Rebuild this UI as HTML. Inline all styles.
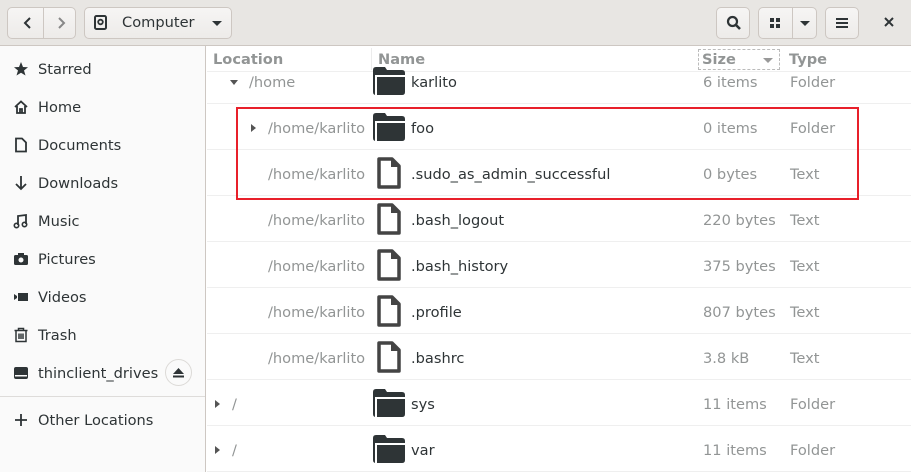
<!DOCTYPE html>
<html><head><style>
*{box-sizing:border-box;margin:0;padding:0}
body{width:911px;height:472px;overflow:hidden;font-family:"DejaVu Sans",sans-serif;background:#fff;position:relative;font-size:14.6px;color:#2e3436}
.hdr{position:absolute;left:0;top:0;width:911px;height:46px;background:#e8e6e3;border-bottom:1px solid #cdc7c2}
.btn{position:absolute;top:7px;height:32px;background:linear-gradient(#f6f5f4,#edebe9);border:1px solid #cdc7c2;border-radius:5px}
.side{position:absolute;left:0;top:46px;width:206px;height:426px;background:#fafafa;border-right:1px solid #cdc7c2}
.si{position:absolute;left:38px;font-size:14.6px;color:#2e3436;line-height:18px;margin-top:1px}
.ic{position:absolute;left:13px}
.ch{position:absolute;top:46px;height:25px;font-weight:bold;color:#929595;font-size:14.6px;line-height:27px}
.row{position:absolute;left:207px;width:704px;height:46px;border-bottom:1px solid #efefef}
.loc{position:absolute;top:16px;color:#929595;white-space:nowrap}
.nm{position:absolute;left:204px;top:16px;color:#2e3436;white-space:nowrap}
.sz{position:absolute;left:496px;top:16px;color:#929595}
.ty{position:absolute;left:583px;top:16px;color:#929595}
.fold{position:absolute;left:166px;top:9px}
.file{position:absolute;left:170px;top:7px}
.tri{position:absolute;top:20px;width:0;height:0;border-top:4px solid transparent;border-bottom:4px solid transparent;border-left:5px solid #555}
</style></head><body>
<div class="hdr">
 <div class="btn" style="left:7px;width:69px"><div style="position:absolute;left:35px;top:0;width:1px;height:30px;background:#cdc7c2"></div>
  <svg style="position:absolute;left:14px;top:8px" width="12" height="14"><path d="M8 2 L3 7 L8 12" stroke="#2e3436" stroke-width="2" fill="none"/></svg>
  <svg style="position:absolute;left:48px;top:8px" width="12" height="14"><path d="M3 2 L8 7 L3 12" stroke="#888" stroke-width="2" fill="none"/></svg></div>
 <div class="btn" style="left:84px;width:148px">
  <svg style="position:absolute;left:9px;top:7px" width="14" height="16"><rect x="1" y="1" width="11" height="13" rx="1.5" fill="none" stroke="#2e3436" stroke-width="2"/><circle cx="6.5" cy="7" r="2.3" fill="none" stroke="#2e3436" stroke-width="1.8"/></svg>
  <span style="position:absolute;left:37px;top:6px;font-size:14.6px">Computer</span>
  <div style="position:absolute;left:127px;top:13px;border-left:5px solid transparent;border-right:5px solid transparent;border-top:5px solid #2e3436"></div></div>
 <div class="btn" style="left:716px;width:34px"><svg style="position:absolute;left:9px;top:7px" width="16" height="16"><circle cx="6.5" cy="6.5" r="4.5" fill="none" stroke="#2e3436" stroke-width="2.2"/><path d="M10 10 L14 14" stroke="#2e3436" stroke-width="2.6"/></svg></div>
 <div class="btn" style="left:758px;width:59px"><div style="position:absolute;left:33px;top:0;width:1px;height:30px;background:#cdc7c2"></div>
  <svg style="position:absolute;left:11px;top:10px" width="10" height="10"><rect x="0" y="0" width="4" height="4" fill="#2e3436"/><rect x="6" y="0" width="4" height="4" fill="#2e3436"/><rect x="0" y="6" width="4" height="4" fill="#2e3436"/><rect x="6" y="6" width="4" height="4" fill="#2e3436"/></svg>
  <div style="position:absolute;left:41px;top:13px;border-left:5px solid transparent;border-right:5px solid transparent;border-top:5px solid #2e3436"></div></div>
 <div class="btn" style="left:825px;width:34px"><svg style="position:absolute;left:10px;top:9px" width="12" height="12"><path d="M0 2H12M0 6H12M0 10H12" stroke="#2e3436" stroke-width="2"/></svg></div>
 <svg style="position:absolute;left:884px;top:17px" width="10" height="10"><path d="M1 1L9 9M9 1L1 9" stroke="#2e3436" stroke-width="2"/></svg>
</div>
<div class="side">
 <svg class="ic" style="top:15px" width="16" height="16"><path d="M8 1 L10 6 L15 6.3 L11 9.5 L12.5 14.5 L8 11.7 L3.5 14.5 L5 9.5 L1 6.3 L6 6 Z" fill="#2e3436"/></svg><div class="si" style="top:14px">Starred</div>
 <svg class="ic" style="top:53px" width="16" height="16"><path d="M2 8 L8 2.5 L14 8 M4 7 V14 H12 V7 M7 14 V10 H9 V14" stroke="#2e3436" stroke-width="1.8" fill="none"/></svg><div class="si" style="top:52px">Home</div>
 <svg class="ic" style="top:91px" width="16" height="16"><path d="M3 1.5 H9 L13 5.5 V14.5 H3 Z" stroke="#2e3436" stroke-width="1.8" fill="none"/></svg><div class="si" style="top:90px">Documents</div>
 <svg class="ic" style="top:129px" width="16" height="16"><path d="M8 1 V14 M3 9 L8 14 L13 9" stroke="#2e3436" stroke-width="1.8" fill="none"/></svg><div class="si" style="top:128px">Downloads</div>
 <svg class="ic" style="top:167px" width="16" height="16"><path d="M5 12 V3 L13 2 V11" stroke="#2e3436" stroke-width="1.8" fill="none"/><circle cx="3.5" cy="12.5" r="2.2" fill="none" stroke="#2e3436" stroke-width="1.6"/><circle cx="11.5" cy="11.5" r="2.2" fill="none" stroke="#2e3436" stroke-width="1.6"/></svg><div class="si" style="top:166px">Music</div>
 <svg class="ic" style="top:205px" width="16" height="16"><rect x="1" y="4" width="14" height="10" rx="1.5" fill="#2e3436"/><rect x="5" y="2" width="6" height="3" fill="#2e3436"/><circle cx="8" cy="9" r="2.5" fill="#fafafa"/></svg><div class="si" style="top:204px">Pictures</div>
 <svg class="ic" style="top:243px" width="16" height="16"><rect x="5" y="4" width="10" height="8" fill="#2e3436"/><path d="M1 5 L4 7 V9 L1 11 Z" fill="#2e3436"/></svg><div class="si" style="top:242px">Videos</div>
 <svg class="ic" style="top:281px" width="16" height="16"><path d="M1.5 3.5 H14.5 M5.5 3 V1.5 H10.5 V3 M3 4 V14.5 H13 V4 M6 6.5 V12 M8 6.5 V12 M10 6.5 V12" stroke="#2e3436" stroke-width="1.5" fill="none"/></svg><div class="si" style="top:280px">Trash</div>
 <svg class="ic" style="top:319px" width="16" height="16"><rect x="1" y="2" width="14" height="12" rx="2" fill="#2e3436"/><rect x="2" y="10" width="12" height="1.5" fill="#fafafa"/></svg><div class="si" style="top:318px">thinclient_drives</div>
 <div style="position:absolute;left:165px;top:313px;width:27px;height:27px;border:1px solid #dcdad7;border-radius:50%"></div>
 <svg style="position:absolute;left:172px;top:320px" width="13" height="13"><path d="M6.5 2 L12 8 H1 Z" fill="#2e3436"/><rect x="1" y="9.5" width="11" height="2" fill="#2e3436"/></svg>
 <div style="position:absolute;left:0;top:350px;width:205px;height:1px;background:#dedcda"></div>
 <svg class="ic" style="top:366px" width="16" height="16"><path d="M8 2 V14 M2 8 H14" stroke="#2e3436" stroke-width="1.8"/></svg><div class="si" style="top:365px">Other Locations</div>
</div>
<div class="ch" style="left:213px">Location</div>
<div style="position:absolute;left:371px;top:48px;width:1px;height:22px;background:#ececec"></div>
<div class="ch" style="left:378px">Name</div>
<div style="position:absolute;left:698px;top:49px;width:82px;height:21px;border:1px dashed #bbb"></div>
<div class="ch" style="left:702px">Size</div>
<div style="position:absolute;left:763px;top:58px;border-left:5px solid transparent;border-right:5px solid transparent;border-top:5px solid #999"></div>
<div class="ch" style="left:789px">Type</div>
<div style="position:absolute;left:207px;top:71px;width:704px;height:1px;background:#efefef"></div>

<svg width="0" height="0" style="position:absolute"><defs>
<symbol id="fo" viewBox="0 0 32 28"><path d="M0 3 Q0 0 3 0 H12 L14 3 H29 Q32 3 32 6 V25 Q32 28 29 28 H3 Q0 28 0 25 Z" fill="#2e3436"/><path d="M3 28 V9 H32" stroke="#fff" stroke-width="2" fill="none"/></symbol>
<symbol id="fi" viewBox="0 0 24 32"><path d="M2 2 H15 L22 9 V30 H2 Z" stroke="#444" stroke-width="3.5" fill="#fff" stroke-linejoin="round"/><path d="M14 2 V10 H22" fill="#444"/></symbol>
</defs></svg>

<div class="row" style="top:58px">
 <div class="tri" style="left:23px;top:22px;border-left:4px solid transparent;border-right:4px solid transparent;border-top:5px solid #555;border-bottom:0"></div>
 <div class="loc" style="left:42px">/home</div><svg class="fold" width="32" height="28"><use href="#fo"/></svg><div class="nm">karlito</div><div class="sz">6 items</div><div class="ty">Folder</div></div>
<div class="row" style="top:104px"><div class="tri" style="left:44px"></div><div class="loc" style="left:61px">/home/karlito</div><svg class="fold" width="32" height="28"><use href="#fo"/></svg><div class="nm">foo</div><div class="sz">0 items</div><div class="ty">Folder</div></div>
<div class="row" style="top:150px"><div class="loc" style="left:61px">/home/karlito</div><svg class="file" width="24" height="32"><use href="#fi"/></svg><div class="nm">.sudo_as_admin_successful</div><div class="sz">0 bytes</div><div class="ty">Text</div></div>
<div class="row" style="top:196px"><div class="loc" style="left:61px">/home/karlito</div><svg class="file" width="24" height="32"><use href="#fi"/></svg><div class="nm">.bash_logout</div><div class="sz">220 bytes</div><div class="ty">Text</div></div>
<div class="row" style="top:242px"><div class="loc" style="left:61px">/home/karlito</div><svg class="file" width="24" height="32"><use href="#fi"/></svg><div class="nm">.bash_history</div><div class="sz">375 bytes</div><div class="ty">Text</div></div>
<div class="row" style="top:288px"><div class="loc" style="left:61px">/home/karlito</div><svg class="file" width="24" height="32"><use href="#fi"/></svg><div class="nm">.profile</div><div class="sz">807 bytes</div><div class="ty">Text</div></div>
<div class="row" style="top:334px"><div class="loc" style="left:61px">/home/karlito</div><svg class="file" width="24" height="32"><use href="#fi"/></svg><div class="nm">.bashrc</div><div class="sz">3.8 kB</div><div class="ty">Text</div></div>
<div class="row" style="top:380px"><div class="tri" style="left:8px"></div><div class="loc" style="left:25px">/</div><svg class="fold" width="32" height="28"><use href="#fo"/></svg><div class="nm">sys</div><div class="sz">11 items</div><div class="ty">Folder</div></div>
<div class="row" style="top:426px"><div class="tri" style="left:8px"></div><div class="loc" style="left:25px">/</div><svg class="fold" width="32" height="28"><use href="#fo"/></svg><div class="nm">var</div><div class="sz">11 items</div><div class="ty">Folder</div></div>

<div style="position:absolute;left:236px;top:107px;width:623px;height:93px;border:2px solid #e8202a"></div>
</body></html>
